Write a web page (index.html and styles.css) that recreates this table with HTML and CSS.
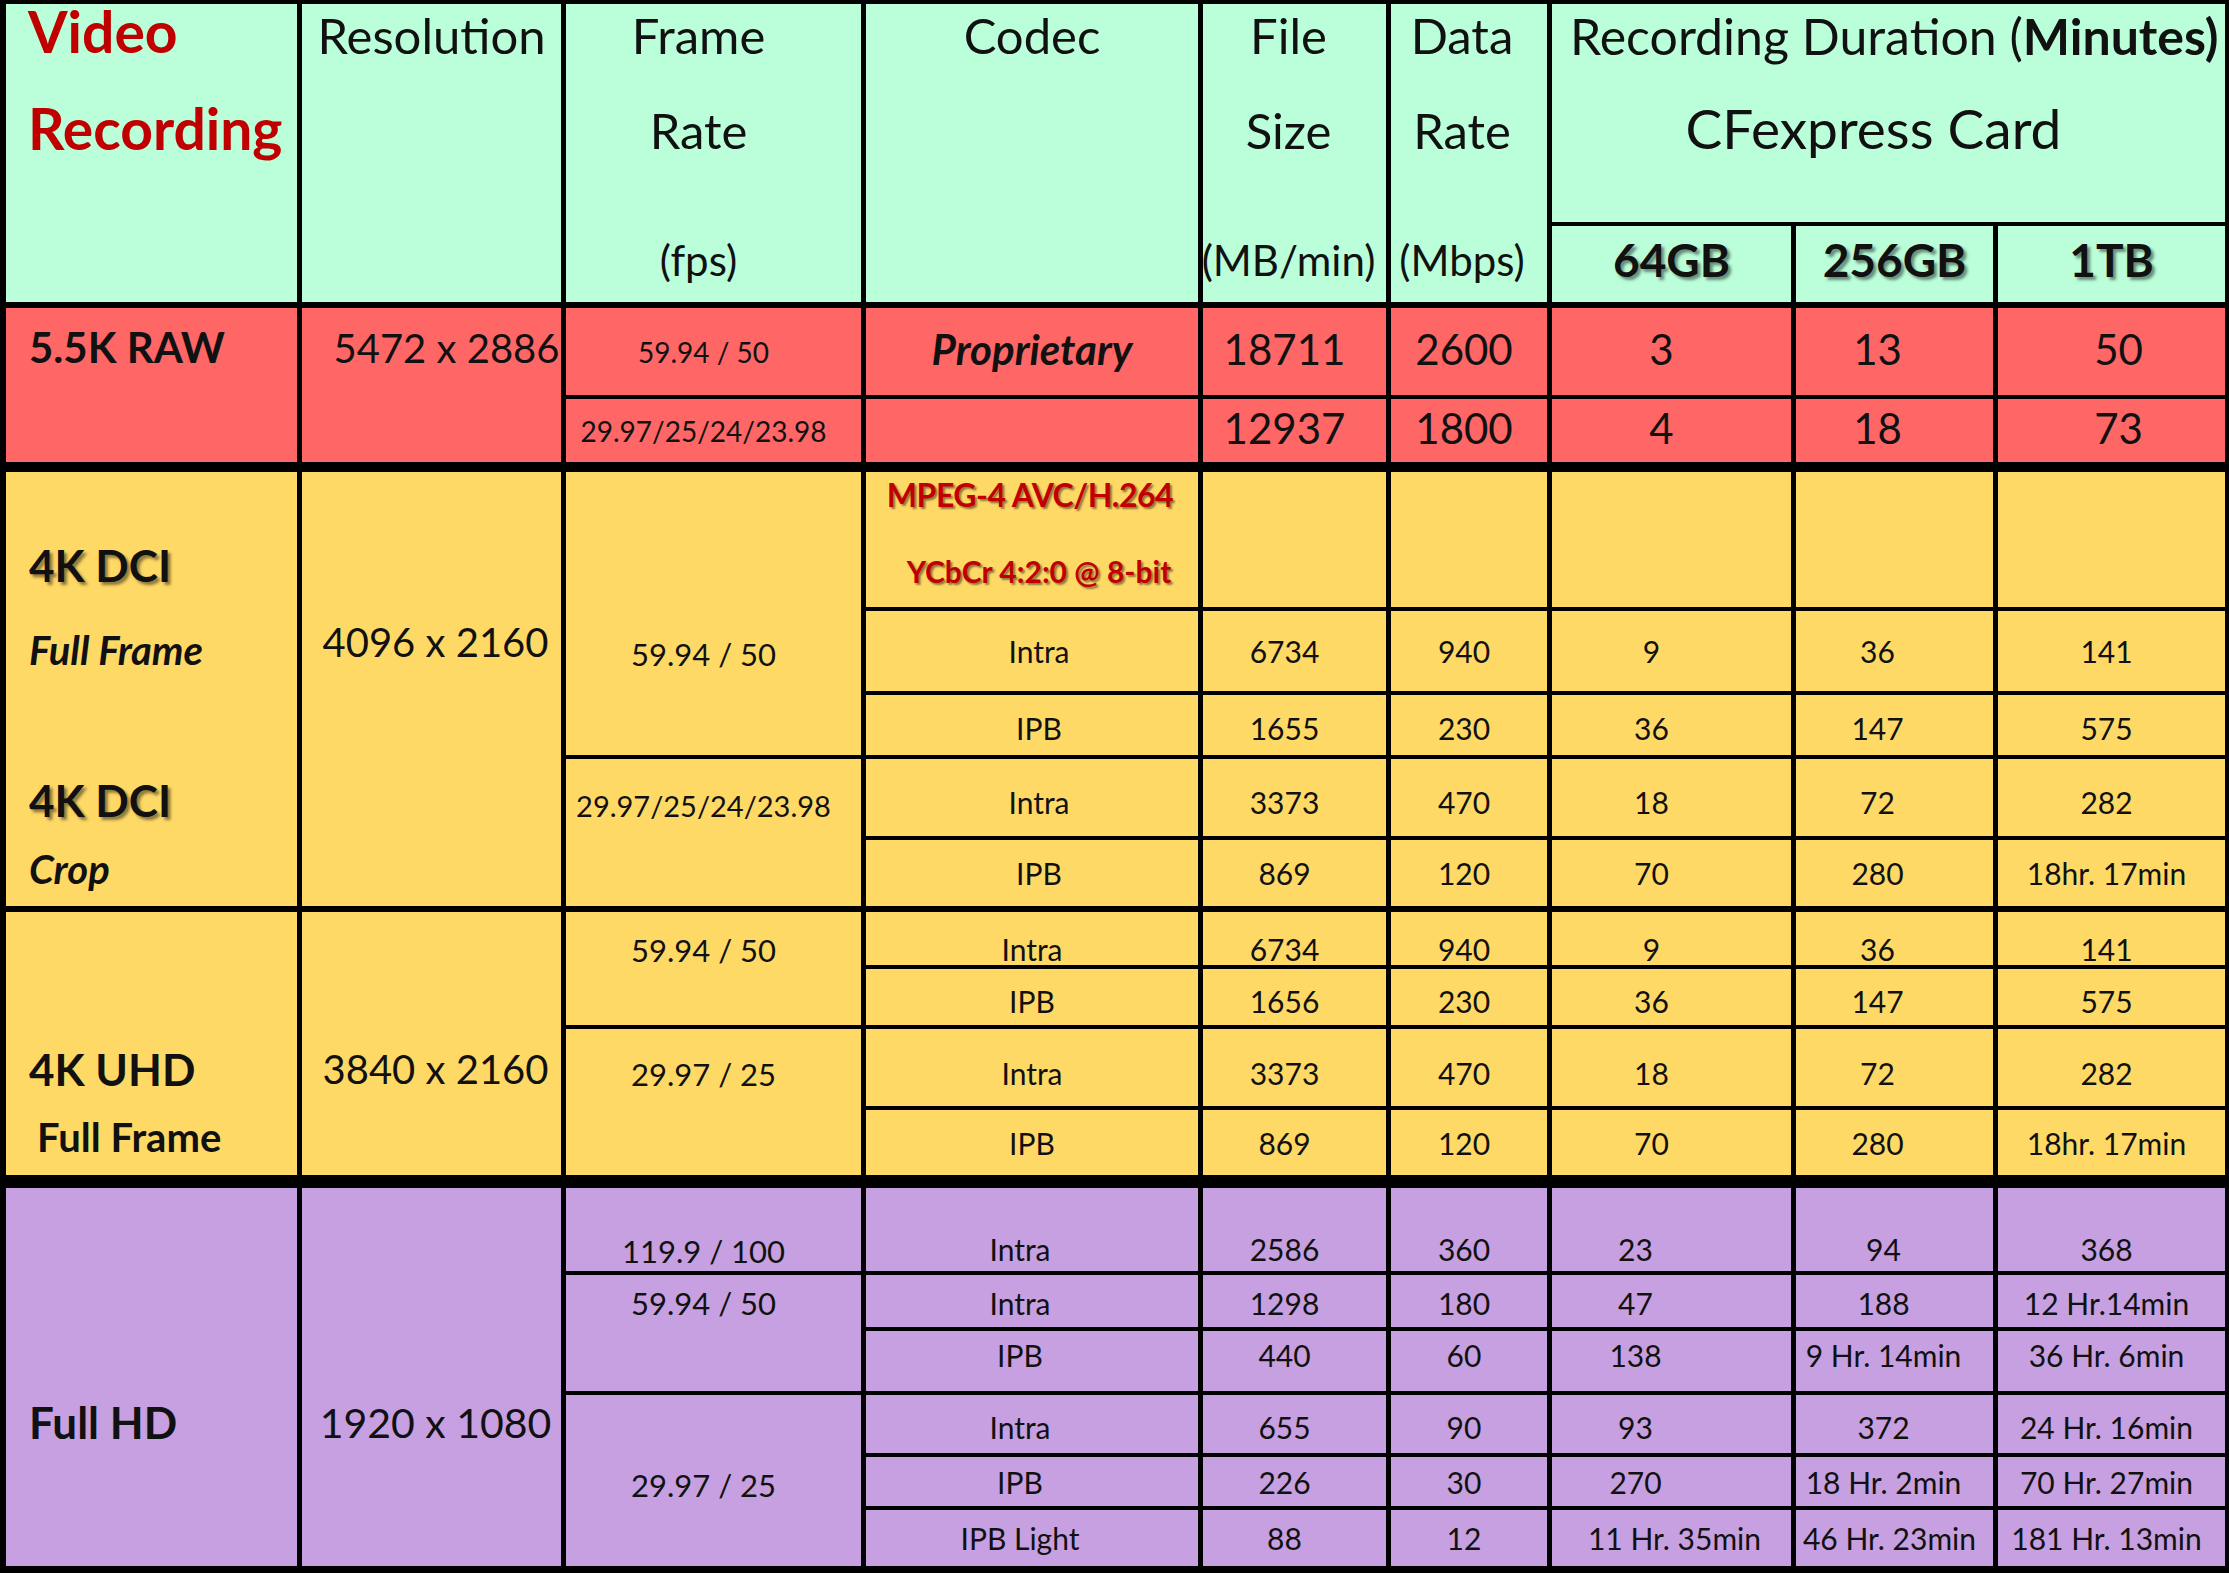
FILE: index.html
```html
<!DOCTYPE html>
<html lang="en">
<head>
<meta charset="utf-8">
<title>Video Recording – CFexpress Card Recording Duration</title>
<link rel="stylesheet" href="styles.css">
</head>
<body>
<div class="sheet">
  <div class="head">
    <div class="hc title"><div class="t1">Video</div><div class="t2">Recording</div></div>
    <div class="hc"><div class="l1">Resolution</div></div>
    <div class="hc frame"><div class="l1">Frame</div><div class="l2">Rate</div><div class="lu">(fps)</div></div>
    <div class="hc"><div class="l1">Codec</div></div>
    <div class="hc file"><div class="l1">File</div><div class="l2">Size</div><div class="lu">(MB/min)</div></div>
    <div class="hc rate"><div class="l1">Data</div><div class="l2">Rate</div><div class="lu">(Mbps)</div></div>
    <div class="dur">
      <div class="dur-top">
        <div class="dur-t1">Recording Duration (<b>Minutes)</b></div>
        <div class="dur-t2">CFexpress Card</div>
      </div>
      <div class="caps">
        <div class="cap">64GB</div>
        <div class="cap">256GB</div>
        <div class="cap">1TB</div>
      </div>
    </div>
  </div>

  <section class="block raw">
    <div class="mode"><div>5.5K RAW</div></div>
    <div class="res">5472 x 2886</div>
    <div class="groups">
      <div class="group">
        <div class="fr">59.94 / 50</div>
        <div class="rows">
          <div class="row h87"><div class="prop">Proprietary</div><div>18711</div><div>2600</div><div>3</div><div>13</div><div>50</div></div>
        </div>
      </div>
      <div class="group">
        <div class="fr">29.97/25/24/23.98</div>
        <div class="rows">
          <div class="row h63"><div></div><div>12937</div><div>1800</div><div>4</div><div>18</div><div>73</div></div>
        </div>
      </div>
    </div>
  </section>

  <section class="block y1">
    <div class="mode">
      <div class="big shadow k1">4K DCI</div>
      <div class="sub k2">Full Frame</div>
      <div class="big shadow k3">4K DCI</div>
      <div class="sub k4">Crop</div>
    </div>
    <div class="res">4096 x 2160</div>
    <div class="groups">
      <div class="group">
        <div class="fr">59.94 / 50</div>
        <div class="rows">
          <div class="row h135"><div class="mpeg"><span class="m1">MPEG-4 AVC/H.264</span><span class="m2">YCbCr 4:2:0 @ 8-bit</span></div><div></div><div></div><div></div><div></div><div></div></div>
          <div class="row h80"><div>Intra</div><div>6734</div><div>940</div><div>9</div><div>36</div><div>141</div></div>
          <div class="row h60 pt6"><div>IPB</div><div>1655</div><div>230</div><div>36</div><div>147</div><div>575</div></div>
        </div>
      </div>
      <div class="group">
        <div class="fr small">29.97/25/24/23.98</div>
        <div class="rows">
          <div class="row h77 pt9"><div>Intra</div><div>3373</div><div>470</div><div>18</div><div>72</div><div>282</div></div>
          <div class="row h66"><div>IPB</div><div>869</div><div>120</div><div>70</div><div>280</div><div>18hr. 17min</div></div>
        </div>
      </div>
    </div>
  </section>

  <section class="block y2">
    <div class="mode">
      <div class="big k1">4K UHD</div>
      <div class="plain k2">Full Frame</div>
    </div>
    <div class="res">3840 x 2160</div>
    <div class="groups">
      <div class="group">
        <div class="fr">59.94 / 50</div>
        <div class="rows">
          <div class="row h53 pt20"><div>Intra</div><div>6734</div><div>940</div><div>9</div><div>36</div><div>141</div></div>
          <div class="row h56 pt7"><div>IPB</div><div>1656</div><div>230</div><div>36</div><div>147</div><div>575</div></div>
        </div>
      </div>
      <div class="group">
        <div class="fr">29.97 / 25</div>
        <div class="rows">
          <div class="row h77 pt11"><div>Intra</div><div>3373</div><div>470</div><div>18</div><div>72</div><div>282</div></div>
          <div class="row h65"><div>IPB</div><div>869</div><div>120</div><div>70</div><div>280</div><div>18hr. 17min</div></div>
        </div>
      </div>
    </div>
  </section>

  <section class="block fhd">
    <div class="mode"><div class="big">Full HD</div></div>
    <div class="res">1920 x 1080</div>
    <div class="groups">
      <div class="group">
        <div class="fr">119.9 / 100</div>
        <div class="rows">
          <div class="row h83 pt38"><div>Intra</div><div>2586</div><div>360</div><div>23</div><div>94</div><div>368</div></div>
        </div>
      </div>
      <div class="group">
        <div class="fr">59.94 / 50</div>
        <div class="rows">
          <div class="row h52 pt3"><div>Intra</div><div>1298</div><div>180</div><div>47</div><div>188</div><div>12 Hr.14min</div></div>
          <div class="row h60 pb12"><div>IPB</div><div>440</div><div>60</div><div>138</div><div>9 Hr. 14min</div><div>36 Hr. 6min</div></div>
        </div>
      </div>
      <div class="group">
        <div class="fr">29.97 / 25</div>
        <div class="rows">
          <div class="row h58 pt6"><div>Intra</div><div>655</div><div>90</div><div>93</div><div>372</div><div>24 Hr. 16min</div></div>
          <div class="row h49"><div>IPB</div><div>226</div><div>30</div><div>270</div><div>18 Hr. 2min</div><div>70 Hr. 27min</div></div>
          <div class="row h56 last"><div>IPB Light</div><div>88</div><div>12</div><div>11 Hr. 35min</div><div>46 Hr. 23min</div><div>181 Hr. 13min</div></div>
        </div>
      </div>
    </div>
  </section>
</div>
</body>
</html>
```
FILE: styles.css
```css
:root {
  --mint: #baffda;
  --red: #ff6666;
  --yellow: #ffd966;
  --purple: #c6a0e0;
  --dark-red: #c00000;
}

* { box-sizing: border-box; }

html, body { margin: 0; padding: 0; }

body {
  width: 2229px;
  height: 1573px;
  overflow: hidden;
  background: #000;
  font-family: Lato, "Open Sans", "DejaVu Sans", sans-serif;
  color: #111;
}

.sheet {
  width: 2229px;
  height: 1573px;
  padding: 4px 4px 7px 6px;
  background: #000;
  display: flex;
  flex-direction: column;
}

/* ---------- header ---------- */
.head {
  flex: none;
  height: 298px;
  display: grid;
  grid-template-columns: 291px 259px 295px 332px 183px 156px 1fr;
  column-gap: 5px;
}

.hc {
  background: var(--mint);
  display: flex;
  flex-direction: column;
  align-items: center;
  font-size: 49px;
  white-space: nowrap;
}
.hc > div { line-height: 49px; }
.hc .l1 { margin-top: 7px; }
.hc .l2 { margin-top: 46px; }
.hc .lu { margin-top: 84px; font-size: 42px; line-height: 42px; }
.hc.frame { padding-right: 30px; }
.hc.file { padding-right: 12px; }
.hc.rate { padding-right: 14px; }

.hc.title {
  align-items: flex-start;
  padding-left: 22px;
  color: var(--dark-red);
  font-weight: 700;
  font-size: 57px;
}
.hc.title > div { line-height: 57px; }
.hc.title .t1 { margin-top: -1px; }
.hc.title .t2 { margin-top: 40px; }

.dur { display: flex; flex-direction: column; gap: 4px; min-width: 0; }
.dur-top {
  height: 218px;
  flex: none;
  background: var(--mint);
  overflow: hidden;
  white-space: nowrap;
}
.dur-t1 { font-size: 50px; line-height: 50px; margin-top: 7px; padding-left: 18px; }
.dur-t1 b { font-weight: 700; }
.dur-t2 { font-size: 55px; line-height: 55px; margin-top: 40px; text-align: center; padding-right: 30px; }

.caps {
  flex: 1;
  display: grid;
  grid-template-columns: 239px 197px 227px;
  column-gap: 5px;
}
.cap {
  background: var(--mint);
  display: flex;
  align-items: center;
  justify-content: center;
  padding-bottom: 10px;
  font-size: 46px;
  font-weight: 700;
  text-shadow: 3px 3px 3px rgba(0, 0, 0, 0.45);
}

/* ---------- blocks ---------- */
.block {
  flex: none;
  display: grid;
  grid-template-columns: 291px 259px 1fr;
  column-gap: 5px;
}
.raw { --bg: var(--red); margin-top: 6px; }
.y1 { --bg: var(--yellow); margin-top: 10px; }
.y2 { --bg: var(--yellow); margin-top: 6px; }
.fhd { --bg: var(--purple); margin-top: 13px; }

.mode, .res, .fr, .row > div { background: var(--bg); }

.mode { font-weight: 700; padding-left: 23px; white-space: nowrap; }
.mode > div { line-height: 1; }
.shadow { text-shadow: 3px 3px 3px rgba(0, 0, 0, 0.45); }
.big { font-size: 44px; }
.sub { font-size: 40px; font-style: italic; }
.plain { font-size: 40px; padding-left: 8px; }

.res { text-align: center; white-space: nowrap; padding-left: 8px; line-height: 1; font-size: 40px; }

.groups { display: flex; flex-direction: column; gap: 4px; }
.group { display: grid; grid-template-columns: 295px 1fr; column-gap: 5px; }
.fr {
  display: flex;
  align-items: center;
  justify-content: center;
  padding-right: 20px;
  font-size: 31px;
  line-height: 1;
  white-space: nowrap;
}
.fr.small { font-size: 29px; }

.rows { display: flex; flex-direction: column; gap: 4px; }
.row {
  display: grid;
  grid-template-columns: 332px 183px 156px 239px 197px 227px;
  grid-template-rows: 100%;
  column-gap: 5px;
}
.row > div {
  display: flex;
  align-items: center;
  justify-content: center;
  min-height: 0;
  font-size: 30px;
  line-height: 1;
  white-space: nowrap;
}
.row > :nth-child(2) { padding-right: 20px; }
.row > :nth-child(3) { padding-right: 10px; }
.row > :nth-child(4) { padding-right: 40px; }
.row > :nth-child(5) { padding-right: 34px; }
.row > :nth-child(6) { padding-right: 10px; }

.h49 { height: 49px; }
.h52 { height: 52px; }
.h53 { height: 53px; }
.h56 { height: 56px; }
.h58 { height: 58px; }
.h60 { height: 60px; }
.h63 { height: 63px; }
.h65 { height: 65px; }
.h66 { height: 66px; }
.h77 { height: 77px; }
.h80 { height: 80px; }
.h83 { height: 83px; }
.h87 { height: 87px; }
.h135 { height: 135px; }

.pt3 > div { padding-top: 3px; }
.pt6 > div { padding-top: 6px; }
.pt7 > div { padding-top: 7px; }
.pt9 > div { padding-top: 9px; }
.pt11 > div { padding-top: 11px; }
.pt20 > div { padding-top: 20px; }
.pt38 > div { padding-top: 38px; }
.pb12 > div { padding-bottom: 12px; }

/* 5.5K RAW */
.raw .mode { font-size: 42px; padding-top: 18px; }
.raw .res { font-size: 40px; padding-top: 20px; padding-left: 30px; }
.raw .fr { font-size: 28px; }
.raw .row > div { font-size: 42px; padding-bottom: 6px; }
.raw .row > :nth-child(4) { padding-right: 20px; }
.raw .row > :nth-child(6) { padding-right: 0; padding-left: 14px; }
.prop { font-weight: 700; font-style: italic; }

/* 4K DCI */
.y1 .mode { padding-top: 71px; }
.y1 .k2 { margin-top: 43px; }
.y1 .k3 { margin-top: 108px; }
.y1 .k4 { margin-top: 27px; }
.y1 .res { padding-top: 150px; }
.y1 .group:first-child .fr { padding-top: 82px; }
.y1 .group:last-child .fr { padding-bottom: 54px; }
.y1 .row > :first-child { padding-left: 14px; }

.row > .mpeg {
  flex-direction: column;
  justify-content: flex-start;
  padding: 7px 0 0 0;
  color: var(--dark-red);
  font-weight: 700;
  text-shadow: 2px 2px 2px rgba(0, 0, 0, 0.45);
}
.mpeg span { display: block; }
.mpeg .m1 { font-size: 32px; line-height: 32px; letter-spacing: -0.5px; padding-right: 18px; }
.mpeg .m2 { font-size: 30px; line-height: 30px; margin-top: 45px; }

/* 4K UHD */
.y2 .mode { padding-top: 135px; }
.y2 .k2 { margin-top: 26px; }
.y2 .res { padding-top: 137px; }
.y2 .group:first-child .fr { padding-bottom: 37px; }
.y2 .group:last-child .fr { padding-bottom: 56px; }

/* Full HD */
.fhd .mode { padding-top: 212px; }
.fhd .res { padding-top: 214px; font-size: 41px; }
.fhd .group:nth-child(1) .fr { padding-top: 43px; }
.fhd .group:nth-child(2) .fr { padding-bottom: 60px; }
.fhd .group:nth-child(3) .fr { padding-top: 9px; }
.fhd .row > :nth-child(1) { padding-right: 24px; }
.fhd .row > :nth-child(4) { padding-right: 72px; }
.fhd .row > :nth-child(5) { padding-right: 22px; }
.fhd .row.last > :nth-child(4) { padding-right: 0; padding-left: 6px; }
.fhd .row.last > :nth-child(5) { padding-right: 10px; }
```
